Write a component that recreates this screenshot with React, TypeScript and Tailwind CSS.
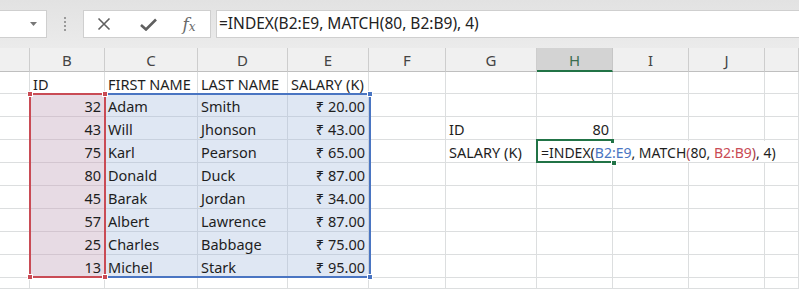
import React from "react";

const cols = [30, 75, 93, 90, 81, 77, 91, 76, 76, 76, 34];
const letters = ["", "B", "C", "D", "E", "F", "G", "H", "I", "J", ""];

const data: [string, string, string, string][] = [
  ["32", "Adam", "Smith", "₹ 20.00"],
  ["43", "Will", "Jhonson", "₹ 43.00"],
  ["75", "Karl", "Pearson", "₹ 65.00"],
  ["80", "Donald", "Duck", "₹ 87.00"],
  ["45", "Barak", "Jordan", "₹ 34.00"],
  ["57", "Albert", "Lawrence", "₹ 87.00"],
  ["25", "Charles", "Babbage", "₹ 75.00"],
  ["13", "Michel", "Stark", "₹ 95.00"],
];

type CellProps = { children?: React.ReactNode; right?: boolean; fill?: "pink" | "blue" };

function Cell({ children, right, fill }: CellProps) {
  const base =
    "border-r border-b px-[3px] pt-[2px] leading-[21px] whitespace-nowrap overflow-hidden text-[14.5px] text-[#1e1e1e]";
  const fillCls =
    fill === "pink"
      ? "bg-[#e7dbe4] border-[#d3c6d0]"
      : fill === "blue"
      ? "bg-[#dfe7f3] border-[#c8d1de]"
      : "bg-white border-[#dcdedf]";
  return <div className={`${base} ${fillCls} ${right ? "text-right" : "text-left"}`}>{children}</div>;
}

export default function App() {
  const rows: React.ReactNode[] = [];

  const row1 = ["", "ID", "FIRST NAME", "LAST NAME", "SALARY (K)", "", "", "", "", "", ""];
  row1.forEach((t, i) => rows.push(<Cell key={`r1-${i}`}>{t}</Cell>));

  data.forEach((r, ri) => {
    const rowNum = ri + 2;
    for (let c = 0; c < cols.length; c++) {
      let content: React.ReactNode = "";
      let right = false;
      let fill: "pink" | "blue" | undefined;
      if (c === 1) {
        content = r[0];
        right = true;
        fill = "pink";
      } else if (c === 2) {
        content = r[1];
        fill = "blue";
      } else if (c === 3) {
        content = r[2];
        fill = "blue";
      } else if (c === 4) {
        content = r[3];
        right = true;
        fill = "blue";
      } else if (c === 6 && rowNum === 3) {
        content = "ID";
      } else if (c === 6 && rowNum === 4) {
        content = "SALARY (K)";
      } else if (c === 7 && rowNum === 3) {
        content = "80";
        right = true;
      }
      rows.push(
        <Cell key={`r${rowNum}-${c}`} right={right} fill={fill}>
          {content}
        </Cell>
      );
    }
  });

  for (let c = 0; c < cols.length; c++) rows.push(<Cell key={`r10-${c}`} />);

  return (
    <div className="w-[799px] h-[289px] overflow-hidden bg-white font-['Noto_Sans',sans-serif] flex flex-col">
      {/* Formula bar */}
      <div className="h-[48px] bg-[linear-gradient(#e2e2e2,#ebebeb)] flex flex-col">
        <div className="h-[10px]" />
        <div className="h-[28px] flex items-stretch">
          <div className="w-[47px] bg-white border border-l-0 border-[#cfcfcf] flex items-center justify-end pr-[9px]">
            <svg width="7" height="4" viewBox="0 0 7 4">
              <path d="M0 0 L7 0 L3.5 4 Z" fill="#777" />
            </svg>
          </div>
          <div className="w-[36px] flex items-center justify-center">
            <div className="flex flex-col gap-[2px]">
              <div className="w-[2px] h-[2px] bg-[#9a9a9a]" />
              <div className="w-[2px] h-[2px] bg-[#9a9a9a]" />
              <div className="w-[2px] h-[2px] bg-[#9a9a9a]" />
              <div className="w-[2px] h-[2px] bg-[#9a9a9a]" />
            </div>
          </div>
          <div className="w-[128px] bg-white border border-[#cfcfcf] flex items-center">
            <div className="w-[40px] flex justify-center">
              <svg width="14" height="14" viewBox="0 0 14 14">
                <path d="M1.5 1.5 L12.5 12.5 M12.5 1.5 L1.5 12.5" stroke="#5f5f5f" strokeWidth="1.6" />
              </svg>
            </div>
            <div className="w-[48px] flex justify-center">
              <svg width="17" height="13" viewBox="0 0 17 13">
                <path d="M1 7 L6 11.5 L16 1.5" stroke="#5f5f5f" strokeWidth="2.6" fill="none" />
              </svg>
            </div>
            <div className="w-[34px] flex justify-center text-[#6a6a6a] font-['DejaVu_Serif',serif] italic text-[17px] leading-none">
              f<span className="text-[12px] self-end">x</span>
            </div>
          </div>
          <div className="w-[5px]" />
          <div className="flex-1 bg-white border border-r-0 border-[#cfcfcf] flex items-center pl-[2px] text-[15.5px] text-[#222] whitespace-nowrap">
            =INDEX(B2:E9, MATCH(80, B2:B9), 4)
          </div>
        </div>
        <div className="flex-1" />
      </div>

      {/* Grid */}
      <div className="relative">
        <div className="grid grid-cols-[30px_75px_93px_90px_81px_77px_91px_76px_76px_76px_34px] grid-rows-[24px_22px_repeat(8,23px)_11px]">
          {letters.map((l, i) => (
            <div
              key={`h-${i}`}
              className={
                i === 7
                  ? "bg-[#d3d3d3] border-r border-[#c6c6c6] border-b-2 border-b-[#217346] text-center text-[15px] leading-[24px] text-[#3b6e50]"
                  : "bg-[#f0f0f0] border-r border-b border-[#cdcdcd] border-b-[#bfbfbf] text-center text-[15px] leading-[24px] text-[#444]"
              }
            >
              {l}
            </div>
          ))}
          {rows}
        </div>

        {/* Blue range B2:E9 */}
        <div className="absolute left-[29px] top-[45px] w-[342px] h-[185px] border-2 border-[#4a75c2] pointer-events-none" />
        <div className="absolute left-[367px] top-[43px] w-[6px] h-[6px] bg-[#4a75c2] border border-white" />
        <div className="absolute left-[367px] top-[226px] w-[6px] h-[6px] bg-[#4a75c2] border border-white" />

        {/* Red range B2:B9 */}
        <div className="absolute left-[29px] top-[45px] w-[77px] h-[185px] border-2 border-[#c94b55] pointer-events-none" />
        <div className="absolute left-[27px] top-[43px] w-[6px] h-[6px] bg-[#c94b55] border border-white" />
        <div className="absolute left-[102px] top-[43px] w-[6px] h-[6px] bg-[#c94b55] border border-white" />
        <div className="absolute left-[27px] top-[226px] w-[6px] h-[6px] bg-[#c94b55] border border-white" />
        <div className="absolute left-[102px] top-[226px] w-[6px] h-[6px] bg-[#c94b55] border border-white" />

        {/* Edit text in H4 */}
        <div className="absolute left-[538px] top-[93px] w-[246px] h-[21px] bg-white text-[14px] leading-[21px] pl-[3px] pt-[1px] text-[#1e1e1e] whitespace-nowrap">
          =INDEX(<span className="text-[#4a75c2]">B2:E9</span>, MATCH<span className="text-[#a6404a]">(</span>80,{" "}
          <span className="text-[#c94b55]">B2:B9</span>
          <span className="text-[#a6404a]">)</span>, 4)
        </div>
        {/* Active cell border */}
        <div className="absolute left-[536px] top-[91px] w-[78px] h-[24px] border-2 border-r-0 border-[#217346] pointer-events-none" />
        <div className="absolute left-[611px] top-[91px] w-[3px] h-[4px] bg-[#217346]" />
        <div className="absolute left-[611px] top-[112px] w-[6px] h-[6px] bg-[#217346] border border-white" />
      </div>
    </div>
  );
}
